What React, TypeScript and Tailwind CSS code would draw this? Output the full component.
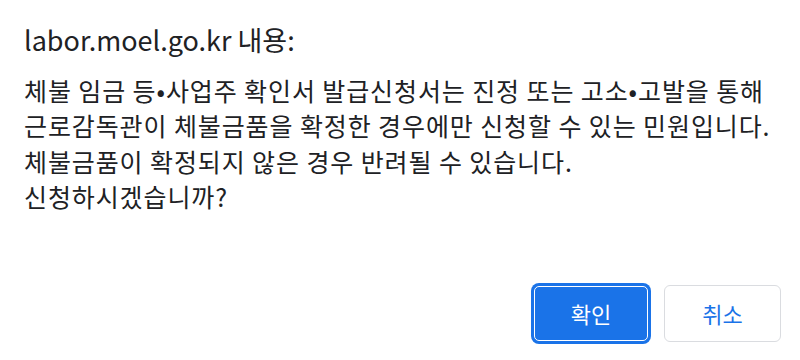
export default function App() {
    const lines = [
        "체불 임금 등•사업주 확인서 발급신청서는 진정 또는 고소•고발을 통해",
        "근로감독관이 체불금품을 확정한 경우에만 신청할 수 있는 민원입니다.",
        "체불금품이 확정되지 않은 경우 반려될 수 있습니다.",
        "신청하시겠습니까?"
    ];

    return (
        <main
            className="w-[800px] h-[360px] bg-white flex flex-col text-[#202124]"
            style={{ fontFamily: '"Noto Sans CJK KR", "Noto Sans", sans-serif' }}
        >
            <h1 className="pl-6 pt-[24px] text-[27px] leading-[32px] font-normal whitespace-nowrap">labor.moel.go.kr 내용:</h1>
            <div className="pl-6 pt-[17px] text-[25px] leading-[35.3px] tracking-[0.9px] whitespace-nowrap">
                {lines.map((line) => (
                    <p key={line}>{line}</p>
                ))}
            </div>
            <div className="mt-auto flex justify-end gap-[13px] pr-[19px] pb-[16px]">
                <div className="rounded-[8px] bg-[#1a73e8] p-[3px]">
                    <button className="w-[114px] h-[55px] rounded-[5px] border border-white text-white text-[22px]">
                        확인
                    </button>
                </div>
                <button className="mt-[2px] w-[117px] h-[57px] rounded-[6px] border border-[#dadce0] bg-white text-[#1a73e8] text-[22px]">
                    취소
                </button>
            </div>
        </main>
    );
}
